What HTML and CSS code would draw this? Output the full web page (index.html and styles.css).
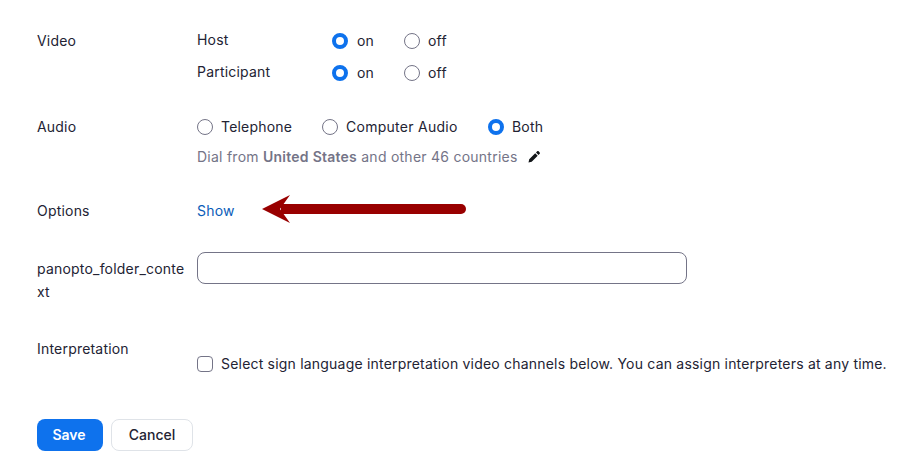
FILE: index.html
```html
<!DOCTYPE html>
<html>
<head>
<meta charset="utf-8">
<title>Meeting settings</title>
<link rel="stylesheet" href="styles.css">
</head>
<body>
<form class="meeting-form">
	<div class="form-row video-row">
		<div class="row-label">Video</div>
		<div class="row-body">
			<div class="video-line">
				<span class="video-who">Host</span>
				<span class="radio checked"></span><span class="opt on-opt">on</span>
				<span class="radio"></span><span class="opt">off</span>
			</div>
			<div class="video-line">
				<span class="video-who">Participant</span>
				<span class="radio checked"></span><span class="opt on-opt">on</span>
				<span class="radio"></span><span class="opt">off</span>
			</div>
		</div>
	</div>
	<div class="form-row audio-row">
		<div class="row-label">Audio</div>
		<div class="row-body">
			<div class="audio-line">
				<span class="radio"></span><span class="opt tel-opt">Telephone</span>
				<span class="radio"></span><span class="opt comp-opt">Computer Audio</span>
				<span class="radio checked"></span><span class="opt">Both</span>
			</div>
			<div class="dial-line">
				Dial from <b>United States</b> and other 46 countries
				<svg class="edit-icon" width="14" height="14" viewBox="0 0 14 14"><path d="M1.5 12.5l.7-3.2 6-6 2.500 2.500-6 6zM9 2.500l1.200-1.200c.4-.4 1-.4 1.400 0l1.100 1.100c.4.4.4 1 0 1.400L11.500 5z" fill="#131619"/></svg>
			</div>
		</div>
	</div>
	<div class="form-row options-row">
		<div class="row-label">Options</div>
		<div class="row-body"><a class="show-link" href="#">Show</a></div>
	</div>
	<div class="form-row folder-row">
		<div class="row-label folder-label">panopto_folder_context</div>
		<div class="row-body"><input class="text-input" type="text"></div>
	</div>
	<div class="form-row interp-row">
		<div class="row-label">Interpretation</div>
		<div class="row-body interp-body">
			<span class="checkbox"></span>
			<span class="opt">Select sign language interpretation video channels below. You can assign interpreters at any time.</span>
		</div>
	</div>
	<div class="form-actions">
		<button class="btn btn-primary" type="button">Save</button>
		<button class="btn btn-default" type="button">Cancel</button>
	</div>
</form>
<svg class="arrow" width="210" height="34" viewBox="0 0 210 34">
	<path d="M20 12H200a5 5 0 0 1 0 10H20z" fill="#990000"/>
	<path d="M1 17L29 3 19 17 29 31z" fill="#990000"/>
</svg>
</body>
</html>
```

FILE: styles.css
```css
* {box-sizing: border-box;}

body {
	margin: 0;
	font-family: Inter, "Liberation Sans", sans-serif;
	font-size: 14px;
	letter-spacing: 0.2px;
	color: #232333;
	background: #fff;
	position: relative;
}

.meeting-form {
	padding: 30px 0 0 37px;
}

.form-row {
	display: flex;
}

.row-label {
	width: 160px;
	flex: none;
	line-height: 22px;
}

.row-body {
	flex: 1;
}

.video-row {
	height: 86px;
}

.video-line {
	display: flex;
	align-items: center;
	height: 22px;
	margin-bottom: 10px;
}

.video-who {
	width: 135px;
	margin-bottom: 3px;
}

.radio {
	width: 16px;
	height: 16px;
	flex: none;
	border: 1px solid #747487;
	border-radius: 50%;
	background: #fff;
}

.radio.checked {
	border: 4px solid #0e72ed;
}

.opt {
	margin-left: 8px;
	margin-bottom: 2px;
}

.on-opt {
	width: 47px;
	margin-left: 9px;
}

.audio-row {
	height: 84px;
}

.audio-line {
	display: flex;
	align-items: center;
	height: 22px;
}

.tel-opt {
	width: 101px;
}

.comp-opt {
	width: 142px;
	letter-spacing: 0.27px;
}

.dial-line {
	margin-top: 8px;
	line-height: 22px;
	letter-spacing: 0.25px;
	color: #747487;
}

.dial-line b {
	font-weight: 600;
}

.edit-icon {
	margin-left: 5px;
	vertical-align: -2px;
}

.options-row {
	height: 52px;
}

.show-link {
	color: #0b5cb8;
	text-decoration: none;
	line-height: 22px;
}

.folder-row {
	height: 86px;
	align-items: flex-start;
}

.folder-label {
	width: 150px;
	margin-right: 10px;
	line-height: 23px;
	padding-top: 5px;
	word-break: break-all;
}

.text-input {
	display: block;
	width: 490px;
	height: 32px;
	border: 1px solid #747487;
	border-radius: 8px;
	background: #fff;
}

.interp-row {
	height: 81px;
}

.interp-body {
	display: flex;
	align-items: center;
	height: 22px;
	margin-top: 15px;
}

.checkbox {
	width: 16px;
	height: 16px;
	flex: none;
	border: 1px solid #747487;
	border-radius: 4px;
}

.form-actions {
	display: flex;
	gap: 8px;
}

.btn {
	height: 32px;
	padding: 0 0 2px;
	border-radius: 8px;
	font: 500 14px Inter, "Liberation Sans", sans-serif;
}

.btn-primary {
	width: 66px;
	padding-right: 2px;
	border: 0;
	background: #0e72ed;
	color: #fff;
	font-weight: 600;
}

.btn-default {
	width: 82px;
	border: 1px solid #dfe3e8;
	background: #fff;
	color: #232333;
}

.arrow {
	position: absolute;
	left: 261px;
	top: 192px;
}
```
